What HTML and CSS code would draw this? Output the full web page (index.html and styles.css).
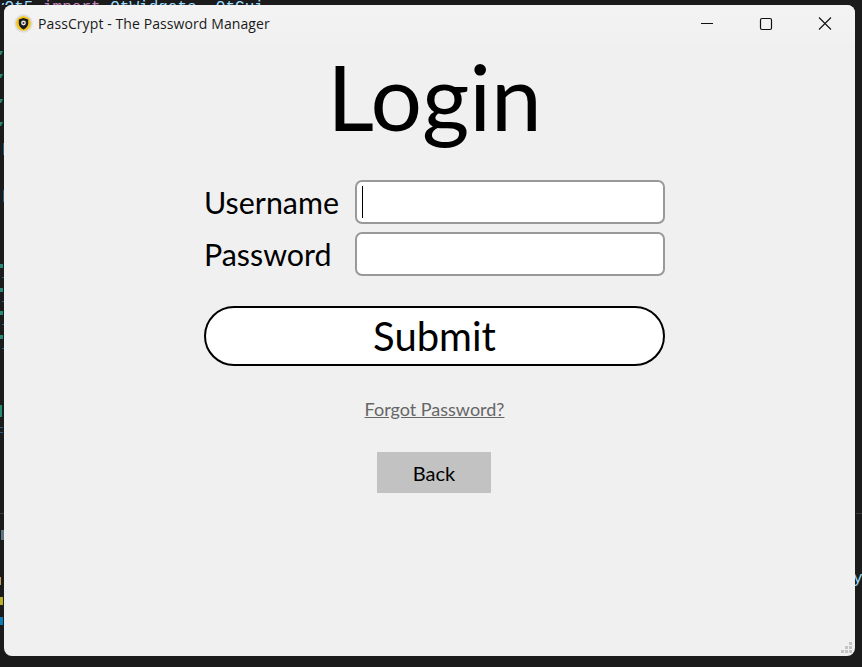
FILE: index.html
```html
<!DOCTYPE html>
<html lang="en">
<head>
<meta charset="utf-8">
<title>PassCrypt - The Password Manager</title>
<link rel="stylesheet" href="styles.css">
</head>
<body>
<div class="editor-top">yQt5 <span class="kw">import</span> QtWidgets, QtGui</div>
<div class="editor-right">y</div>
<svg class="specks" width="862" height="667" viewBox="0 0 862 667">
  <g fill="#258a74">
    <path d="M0 51h3l-2 4H0zM0 74h3l-2 4H0zM0 99h3l-2 4H0zM0 122h3l-2 4H0zM0 264h3v4H0zM0 288h3v4H0zM0 311h3v4H0zM0 335h3v4H0zM0 405h2v12H0z"/>
  </g>
  <g fill="#1f5f7f">
    <path d="M3 143h1v12H3zM3 190h1v12H3zM2 277h2v1H2zM2 301h2v1H2zM2 324h2v1H2zM2 348h2v1H2zM0 427h3v1H0zM0 432h3v1H0z"/>
  </g>
  <path d="M0 513h4v1H0zM856 513h6v1H856z" fill="#3a3a3a"/>
  <path d="M1 530h3v10H1z" fill="#5d7482"/>
  <path d="M0 577h1v8H0z" fill="#c79a55"/>
  <path d="M0 597h3v8H0z" fill="#b8b028"/>
  <path d="M0 617h3v8H0z" fill="#0f7cb6"/>
</svg>
<div class="window">
  <header class="titlebar">
    <svg class="app-icon" width="19" height="19" viewBox="0 0 19 19">
      <circle cx="9.5" cy="9.5" r="9.3" fill="#dedede"/>
      <circle cx="9.5" cy="9.5" r="7.3" fill="#f5c518"/>
      <path d="M9.5 3.9 14.2 5.5V9.5C14.2 12.1 12 14.2 9.5 15.5 7 14.2 4.8 12.1 4.8 9.5V5.5Z" fill="#1b1b1b"/>
      <circle cx="9.5" cy="9" r="2.4" fill="#e8e8e8"/>
      <circle cx="9.5" cy="9" r="1" fill="#333"/>
    </svg>
    <span class="app-title">PassCrypt - The Password Manager</span>
    <div class="controls">
      <svg class="ctrl" width="46" height="37" viewBox="0 0 46 37"><path d="M17 18.5H29" stroke="#111" fill="none"/></svg>
      <svg class="ctrl" width="46" height="37" viewBox="0 0 46 37"><rect x="17.5" y="13.5" width="11" height="11" rx="1.5" stroke="#111" stroke-width="1.2" fill="none"/></svg>
      <svg class="ctrl" width="46" height="37" viewBox="0 0 46 37"><path d="M17 12.5 29 24.5M29 12.5 17 24.5" stroke="#111" stroke-width="1.1" fill="none"/></svg>
    </div>
  </header>
  <main class="content">
    <h1 class="heading">Login</h1>
    <form class="form">
      <div class="row">
        <label class="label">Username</label>
        <div class="input"><span class="caret"></span></div>
      </div>
      <div class="row">
        <label class="label">Password</label>
        <div class="input"></div>
      </div>
      <div class="submit">Submit</div>
    </form>
    <a class="forgot">Forgot Password?</a>
    <div class="back">Back</div>
  </main>
  <svg class="grip" width="12" height="12" viewBox="0 0 12 12">
    <path d="M8 0h3v3H8zM4 4h3v3H4zM8 4h3v3H8zM0 8h3v3H0zM4 8h3v3H4zM8 8h3v3H8z" fill="#c4c4c4"/>
  </svg>
</div>
</body>
</html>
```
FILE: styles.css
```css
* { box-sizing: border-box; }
html, body { margin: 0; height: 100%; }
body {
  width: 862px;
  height: 667px;
  overflow: hidden;
  background: #1b1b1b;
  position: relative;
  padding: 5px 7px 11px 4px;
  font-family: Lato, sans-serif;
}
.editor-top {
  position: absolute;
  top: 0;
  left: -5px;
  height: 5px;
  overflow: hidden;
  font: 16px/16px "Liberation Mono", monospace;
  color: #9cdcfe;
  white-space: nowrap;
}
.kw { color: #c586c0; }
.editor-right {
  position: absolute;
  top: 570px;
  left: 853px;
  font: 16px/18px "Liberation Mono", monospace;
  color: #9cdcfe;
}
.specks { position: absolute; left: 0; top: 0; }
.window {
  position: relative;
  width: 851px;
  height: 651px;
  background: #f0f0f0;
  border-radius: 8px;
  overflow: hidden;
  display: flex;
  flex-direction: column;
}
.titlebar {
  flex: none;
  height: 37px;
  display: flex;
  align-items: center;
  padding-left: 10px;
  background: linear-gradient(#f3f3f3, #f1f1f1);
}
.app-icon { flex: none; }
.app-title {
  margin-left: 5px;
  font: 14px "Open Sans", sans-serif;
  letter-spacing: 0.09px;
  color: #1a1a1a;
}
.controls { margin-left: auto; display: flex; margin-right: 7px; gap: 13px; }
.ctrl { display: block; }
.content {
  flex: 1;
  display: flex;
  flex-direction: column;
  align-items: center;
  padding-left: 10px;
}
.heading {
  margin: 0;
  font-size: 91px;
  font-weight: 400;
  line-height: 108px;
  color: #000;
}
.form {
  width: 461px;
  margin-top: 30px;
  display: flex;
  flex-direction: column;
  gap: 8px;
}
.row { display: flex; align-items: center; height: 44px; }
.label { width: 151px; font-size: 30.4px; color: #000; }
.input {
  width: 310px;
  height: 44px;
  background: #fff;
  border: 2px solid #999;
  border-radius: 7px;
  padding: 4px 5px;
}
.caret { display: block; width: 1px; height: 32px; background: #000; }
.submit {
  margin-top: 22px;
  height: 60px;
  border: 2px solid #000;
  border-radius: 30px;
  background: #fff;
  font-size: 40px;
  line-height: 56px;
  text-align: center;
  color: #000;
}
.forgot {
  margin-top: 32px;
  font-size: 18px;
  line-height: 22px;
  color: #666;
  text-decoration: underline;
}
.back {
  margin-top: 32px;
  margin-right: 1px;
  width: 114px;
  height: 41px;
  background: #c2c2c2;
  font-size: 20px;
  line-height: 43px;
  text-align: center;
  color: #000;
}
.grip { position: absolute; right: 2px; bottom: 2px; }
```
